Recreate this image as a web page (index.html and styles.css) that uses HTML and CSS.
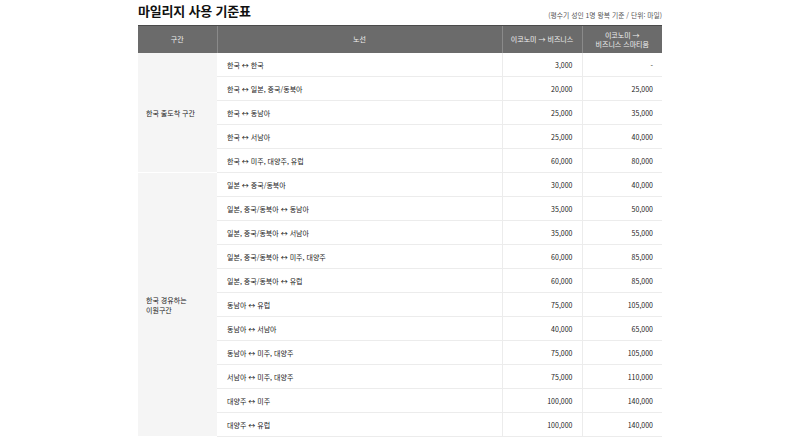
FILE: index.html
```html
<!DOCTYPE html>
<html lang="ko">
<head>
<meta charset="utf-8">
<link rel="stylesheet" href="styles.css">
</head>
<body>
<div class="wrap">
  <div class="head">
    <h1 class="title">마일리지 사용 기준표</h1>
    <span class="note">(평수기 성인 1명 왕복 기준 / 단위: 마일)</span>
  </div>
  <table class="tbl">
    <colgroup>
      <col class="c1"><col class="c2"><col class="c3"><col class="c4">
    </colgroup>
    <thead>
      <tr>
        <th>구간</th>
        <th>노선</th>
        <th>이코노미 → 비즈니스</th>
        <th>이코노미 →<br>비즈니스 스마티움</th>
      </tr>
    </thead>
    <tbody>
      <tr><td class="grp" rowspan="5">한국 출도착 구간</td><td class="route">한국 ↔ 한국</td><td class="num">3,000</td><td class="num">-</td></tr>
      <tr><td class="route">한국 ↔ 일본, 중국/동북아</td><td class="num">20,000</td><td class="num">25,000</td></tr>
      <tr><td class="route">한국 ↔ 동남아</td><td class="num">25,000</td><td class="num">35,000</td></tr>
      <tr><td class="route">한국 ↔ 서남아</td><td class="num">25,000</td><td class="num">40,000</td></tr>
      <tr class="last"><td class="route">한국 ↔ 미주, 대양주, 유럽</td><td class="num">60,000</td><td class="num">80,000</td></tr>
      <tr><td class="grp" rowspan="11">한국 경유하는<br>이원구간</td><td class="route">일본 ↔ 중국/동북아</td><td class="num">30,000</td><td class="num">40,000</td></tr>
      <tr><td class="route">일본, 중국/동북아 ↔ 동남아</td><td class="num">35,000</td><td class="num">50,000</td></tr>
      <tr><td class="route">일본, 중국/동북아 ↔ 서남아</td><td class="num">35,000</td><td class="num">55,000</td></tr>
      <tr><td class="route">일본, 중국/동북아 ↔ 미주, 대양주</td><td class="num">60,000</td><td class="num">85,000</td></tr>
      <tr><td class="route">일본, 중국/동북아 ↔ 유럽</td><td class="num">60,000</td><td class="num">85,000</td></tr>
      <tr><td class="route">동남아 ↔ 유럽</td><td class="num">75,000</td><td class="num">105,000</td></tr>
      <tr><td class="route">동남아 ↔ 서남아</td><td class="num">40,000</td><td class="num">65,000</td></tr>
      <tr><td class="route">동남아 ↔ 미주, 대양주</td><td class="num">75,000</td><td class="num">105,000</td></tr>
      <tr><td class="route">서남아 ↔ 미주, 대양주</td><td class="num">75,000</td><td class="num">110,000</td></tr>
      <tr><td class="route">대양주 ↔ 미주</td><td class="num">100,000</td><td class="num">140,000</td></tr>
      <tr><td class="route">대양주 ↔ 유럽</td><td class="num">100,000</td><td class="num">140,000</td></tr>
    </tbody>
  </table>
</div>
</body>
</html>
```

FILE: styles.css
```css
html, body {
  margin: 0;
  padding: 0;
  background: #ffffff;
}
body {
  font-family: "Noto Sans CJK KR", "Noto Sans", sans-serif;
  color: #333333;
}
.wrap {
  width: 524px;
  margin: 0 auto;
  padding-top: 3px;
}
.head {
  display: flex;
  align-items: flex-end;
  justify-content: space-between;
  height: 22px;
}
.title {
  margin: 0;
  font-size: 13px;
  font-weight: 700;
  line-height: 16px;
  color: #111111;
  letter-spacing: -0.2px;
  align-self: flex-start;
}
.note {
  font-size: 6.8px;
  color: #555555;
  line-height: 10px;
  margin-bottom: 5px;
}
.tbl {
  width: 524px;
  border-collapse: collapse;
  table-layout: fixed;
  font-size: 7px;
}
.c1 { width: 79px; }
.c2 { width: 285px; }
.c3 { width: 80px; }
.c4 { width: 80px; }
.tbl th {
  background: #6b6b6b;
  color: #f0f0f0;
  font-weight: 400;
  height: 27px;
  padding: 0;
  line-height: 9px;
  border-top: 1px solid #4a4a4a;
  border-left: 1px solid #8a8a8a;
  text-align: center;
}
.tbl th:first-child { border-left: none; }
.tbl td {
  height: 23px;
  padding: 0;
  border-bottom: 1px solid #ececec;
  line-height: 10px;
  color: #222222;
}
.tbl td.grp {
  background: #f5f5f5;
  padding-left: 8px;
  border-bottom: 1px solid #ffffff;
}
.tbl td.route {
  padding-left: 10px;
}
.tbl td.num {
  text-align: right;
  padding-right: 9px;
  border-left: 1px solid #ececec;
}
```
